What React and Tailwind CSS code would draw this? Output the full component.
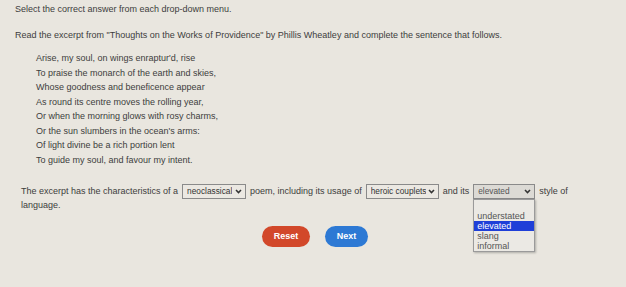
import React from 'react';

const POEM = [
  "Arise, my soul, on wings enraptur'd, rise",
  'To praise the monarch of the earth and skies,',
  'Whose goodness and beneficence appear',
  'As round its centre moves the rolling year,',
  'Or when the morning glows with rosy charms,',
  "Or the sun slumbers in the ocean's arms:",
  'Of light divine be a rich portion lent',
  'To guide my soul, and favour my intent.',
];

const OPTIONS = ['understated', 'elevated', 'slang', 'informal'];

function Chevron() {
  return (
    <svg width="7" height="5" viewBox="0 0 7 5" className="shrink-0">
      <path d="M1 1 L3.5 3.6 L6 1" fill="none" stroke="#333" strokeWidth="1.5" />
    </svg>
  );
}

function Select({ value, width, open }) {
  return (
    <span className={`relative inline-flex items-center justify-between gap-[2px] h-[15px] pl-[4px] pr-[3px] mx-[4px] whitespace-nowrap border border-[#8a8a8a] text-[8.3px] leading-[13px] ${open ? 'bg-[#dcdad5]' : 'bg-[#ebe8e2]'} ${width}`}>
      <span className={`overflow-hidden ${open ? 'text-[#555]' : 'text-[#333]'}`}>{value}</span>
      <Chevron />
      {open && (
        <div className="absolute left-[-1px] top-[14px] w-[calc(100%+2px)] h-[53px] bg-[#ebe9e4] border border-[#9a9a9a] shadow-[1px_1px_2px_rgba(0,0,0,0.25)] pt-[11px] leading-[10px] text-[9px] text-[#555]">
          {OPTIONS.map((o) => (
            <div key={o} className={`px-[3px] ${o === value ? 'bg-[#1f3fd8] text-white' : ''}`}>{o}</div>
          ))}
        </div>
      )}
    </span>
  );
}

export default function App() {
  return (
    <div className="w-[626px] h-[287px] overflow-hidden bg-[#e9e6df] text-[#3d3d3d] text-[9px] leading-[12px]" style={{ fontFamily: '"Liberation Sans", Arial, sans-serif' }}>
      <div className="pl-[15px] pt-[3px]">Select the correct answer from each drop-down menu.</div>
      <div className="pl-[15px] mt-[14px]">
        Read the excerpt from "Thoughts on the Works of Providence" by Phillis Wheatley and complete the sentence that follows.
      </div>
      <div className="pl-[36px] mt-[11px] flex flex-col gap-[2.5px]">
        {POEM.map((l) => (
          <div key={l}>{l}</div>
        ))}
      </div>
      <div className="pl-[21px] mt-[18px] flex flex-col">
        <div className="flex items-center h-[15px] whitespace-nowrap">
          <span>The excerpt has the characteristics of a</span>
          <Select value="neoclassical" width="w-[64px]" />
          <span>poem, including its usage of</span>
          <Select value="heroic couplets" width="w-[73px]" />
          <span>and its</span>
          <Select value="elevated" width="w-[62px]" open />
          <span>style of</span>
        </div>
        <div className="leading-[12px]">language.</div>
      </div>
      <div className="flex gap-[15px] pl-[262px] mt-[15px]">
        <button className="w-[48px] h-[21px] rounded-full bg-[#d2482a] text-white font-bold text-[9px]">Reset</button>
        <button className="w-[43px] h-[21px] rounded-full bg-[#2d79d4] text-white font-bold text-[9px]">Next</button>
      </div>
    </div>
  );
}
